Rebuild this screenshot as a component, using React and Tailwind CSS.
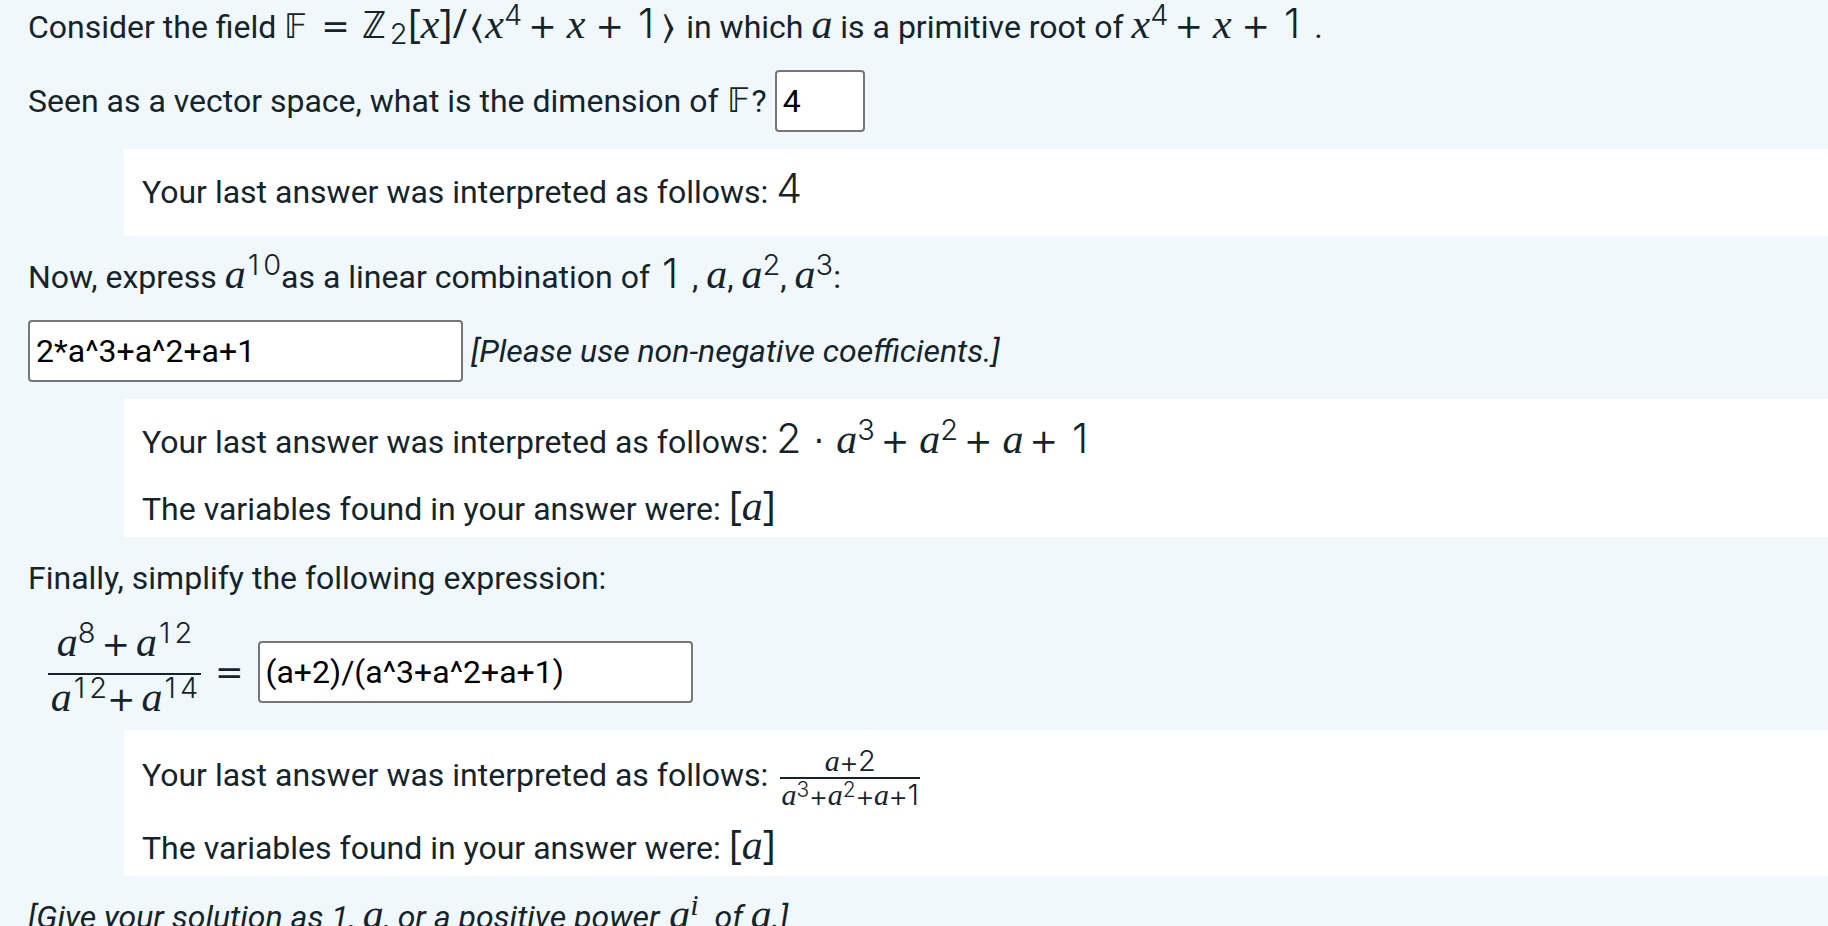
import React, { useState } from 'react';

const Var = ({ className = '', children }) => (
    <i className={`font-['Liberation_Serif',serif] text-[42px] leading-[0] ${className}`}>{children}</i>
);

const Num = ({ children }) => (
    <span className="font-['Inter',sans-serif] font-light text-[41px] leading-[0]">{children}</span>
);

const Sup = ({ children }) => (
    <sup className="static align-[13px] font-['Inter',sans-serif] font-light text-[29px] leading-[0]">{children}</sup>
);

const One = () => (
    <span className="ml-1 mr-1.5 font-['Inter',sans-serif] font-light text-[41px] leading-[0]">1</span>
);

const SupOne = () => (
    <span className="ml-0.5 mr-1">1</span>
);

const Bracket = ({ children }) => (
    <span className="font-['Open_Sans',sans-serif] text-[40px] leading-[0]">{children}</span>
);

const Op = ({ className = 'ml-1.5 mr-2.5', children }) => (
    <span className={`font-['DejaVu_Sans',sans-serif] text-[34px] leading-[0] ${className}`}>{children}</span>
);

const Field = () => (
    <span className="mr-0.5 font-['DejaVu_Sans',sans-serif] font-extralight text-[34px] leading-[0]">𝔽</span>
);

const Integers = () => (
    <span className="mr-1 font-['DejaVu_Sans',sans-serif] font-extralight text-[38px] leading-[0]">ℤ</span>
);

const Angle = ({ children }) => (
    <span className="mx-0.5 font-['DejaVu_Math_TeX_Gyre',serif] text-[34px] leading-[0]">{children}</span>
);

// Small pieces used inside the inline fraction
const SmallVar = ({ children }) => (
    <i className="font-['Liberation_Serif',serif] text-[30px] leading-[0]">{children}</i>
);

const SmallNum = ({ children }) => (
    <span className="font-['Inter',sans-serif] font-light text-[29px] leading-[0]">{children}</span>
);

const SmallSup = ({ children }) => (
    <sup className="static align-[8px] font-['Inter',sans-serif] font-light text-[21px] leading-[0]">{children}</sup>
);

const SmallOp = ({ children }) => (
    <span className="font-['DejaVu_Sans',sans-serif] text-[22px] leading-[0]">{children}</span>
);

const AnswerInput = ({ className, ...props }) => (
    <input
        type="text"
        autoComplete="off"
        spellCheck={false}
        className={`h-[62px] rounded border-2 border-[#767676] bg-white px-1.5 text-[32px] text-black focus:outline-none focus:border-sky-700 ${className}`}
        {...props}
    />
);

const Quartic = () => (
    <>
        <Var>x</Var><Sup>4</Sup><Op>+</Op><Var className="mr-1">x</Var><Op>+</Op><One />
    </>
);

const Feedback = ({ className, children }) => (
    <div className={`ml-24 my-[17px] bg-white pl-[18px] flex flex-col gap-[19px] ${className}`}>
        {children}
    </div>
);

const VariablesFound = () => (
    <p>The variables found in your answer were: <Bracket>[</Bracket><Var>a</Var><Bracket>]</Bracket></p>
);

const App = () => {
    const [answers, setAnswers] = useState({
        dimension: '4',
        power: '2*a^3+a^2+a+1',
        fraction: '(a+2)/(a^3+a^2+a+1)',
    });

    const handleChange = (e) => {
        setAnswers({ ...answers, [e.target.name]: e.target.value });
    };

    return (
        <form className="min-h-screen bg-[#f0f8fc] pl-7 pt-[3px] font-['Roboto',sans-serif] text-[32px] leading-[48px] text-[#14242a]">
            <p>
                Consider the field <Field /><Op className="mx-3">=</Op><Integers />
                <sub className="static align-[-6px] font-['Inter',sans-serif] font-light text-[29px] leading-[0]">2</sub>
                <Bracket>[</Bracket><Var>x</Var><Bracket>]/</Bracket><Angle>⟨</Angle><Quartic /><Angle>⟩</Angle>
                {' '}in which <Var>a</Var> is a primitive root of <Quartic /> .
            </p>

            <div className="mt-[19px] flex items-center gap-2">
                <label htmlFor="dimension">
                    Seen as a vector space, what is the dimension of <Field />?
                </label>
                <AnswerInput id="dimension" name="dimension" className="w-[90px]" value={answers.dimension} onChange={handleChange} />
            </div>

            <Feedback className="pt-[19px] pb-5">
                <p>Your last answer was interpreted as follows: <Num>4</Num></p>
            </Feedback>

            <p>
                <label htmlFor="power">
                    Now, express <Var>a</Var><Sup><SupOne />0</Sup>as a linear combination of <One /> , <Var>a</Var>, <Var>a</Var><Sup>2</Sup>, <Var>a</Var><Sup>3</Sup>:
                </label>
            </p>

            <div className="mt-[19px] flex items-center gap-2">
                <AnswerInput id="power" name="power" className="w-[435px]" value={answers.power} onChange={handleChange} />
                <em>[Please use non-negative coefficients.]</em>
            </div>

            <Feedback className="pt-[19px] pb-1">
                <p>
                    Your last answer was interpreted as follows: <Num>2</Num><Op className="mx-3">·</Op>
                    <Var>a</Var><Sup>3</Sup><Op>+</Op><Var>a</Var><Sup>2</Sup><Op>+</Op><Var>a</Var><Op>+</Op><One />
                </p>
                <VariablesFound />
            </Feedback>

            <p>
                <label htmlFor="fraction">Finally, simplify the following expression:</label>
            </p>

            <div className="mt-[29px] flex items-center">
                <div className="ml-5 w-[153px] text-center whitespace-nowrap">
                    <div className="border-b-2 border-[#14242a] pb-3.5 leading-[28px]">
                        <Var>a</Var><Sup>8</Sup><Op className="mx-1.5">+</Op><Var>a</Var><Sup><SupOne />2</Sup>
                    </div>
                    <div className="-mb-3 leading-[50px]">
                        <Var>a</Var><Sup><SupOne />2</Sup><Op className="mr-1.5">+</Op><Var>a</Var><Sup><SupOne />4</Sup>
                    </div>
                </div>
                <Op className="mx-3.5">=</Op>
                <AnswerInput id="fraction" name="fraction" className="w-[435px]" value={answers.fraction} onChange={handleChange} />
            </div>

            <Feedback className="pt-[19px] pb-1">
                <div className="flex items-start gap-3">
                    <p className="pt-0.5">Your last answer was interpreted as follows:</p>
                    <div className="w-[140px] text-center whitespace-nowrap">
                        <div className="border-b-2 border-[#14242a] pb-1.5 leading-[22px]">
                            <SmallVar>a</SmallVar><SmallOp>+</SmallOp><SmallNum>2</SmallNum>
                        </div>
                        <div className="-mb-1 leading-[30px]">
                            <SmallVar>a</SmallVar><SmallSup>3</SmallSup><SmallOp>+</SmallOp>
                            <SmallVar>a</SmallVar><SmallSup>2</SmallSup><SmallOp>+</SmallOp>
                            <SmallVar>a</SmallVar><SmallOp>+</SmallOp><SmallNum>1</SmallNum>
                        </div>
                    </div>
                </div>
                <VariablesFound />
            </Feedback>

            <p className="italic">
                [Give your solution as 1, <Var>a</Var>, or a positive power <Var className="ml-0.5">a</Var>
                <sup className="static mr-2 align-[13px] font-['Liberation_Serif',serif] text-[30px] leading-[0]">i</sup> of <Var>a</Var>.]
            </p>
        </form>
    );
};

export default App;
